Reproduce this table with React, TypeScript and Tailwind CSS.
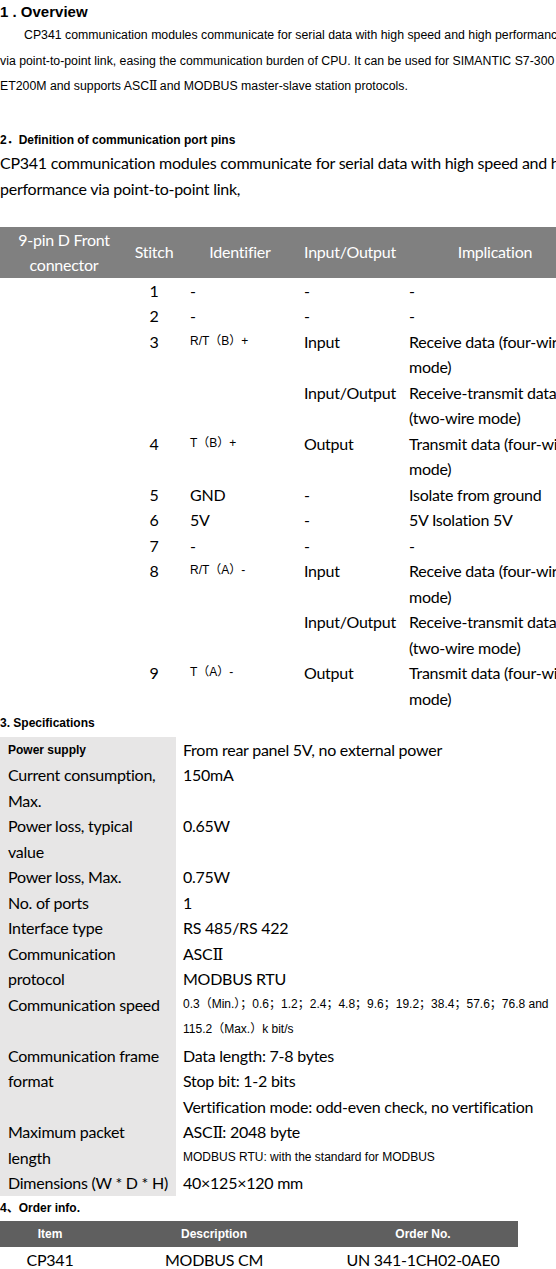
import type { ReactNode } from 'react';

const yahei = "font-['Lato','Noto_Sans_CJK_SC',sans-serif] text-[16px] tracking-[-0.25px]";
const arial = "font-['Liberation_Sans','Noto_Sans_CJK_SC',Arial,sans-serif]";

interface PinRow {
    stitch?: string;
    id?: ReactNode;
    span?: number;
    io: string;
    text: ReactNode;
}

const small = (s: string) => (
    <span className={`${arial} inline-block align-top text-[12px] leading-[25.5px] tracking-normal`}>{s}</span>
);

const Roman2 = () => <span className="font-['DejaVu_Serif',serif] leading-none tracking-[-1px]">Ⅱ</span>;

const pins: PinRow[] = [
    { stitch: '1', id: '-', io: '-', text: '-' },
    { stitch: '2', id: '-', io: '-', text: '-' },
    { stitch: '3', id: small('R/T（B）+'), span: 2, io: 'Input', text: <>Receive data (four-wire<br />mode)</> },
    { io: 'Input/Output', text: <>Receive-transmit data<br />(two-wire mode)</> },
    { stitch: '4', id: small('T（B）+'), io: 'Output', text: <>Transmit data (four-wire<br />mode)</> },
    { stitch: '5', id: 'GND', io: '-', text: 'Isolate from ground' },
    { stitch: '6', id: '5V', io: '-', text: '5V Isolation 5V' },
    { stitch: '7', id: '-', io: '-', text: '-' },
    { stitch: '8', id: small('R/T（A）-'), span: 2, io: 'Input', text: <>Receive data (four-wire<br />mode)</> },
    { io: 'Input/Output', text: <>Receive-transmit data<br />(two-wire mode)</> },
    { stitch: '9', id: small('T（A）-'), io: 'Output', text: <>Transmit data (four-wire<br />mode)</> },
];

interface SpecRow {
    label: ReactNode;
    value: ReactNode;
}

const smallLine = `${arial} block text-[12px] leading-[25.5px] tracking-normal`;

const specs: SpecRow[] = [
    {
        label: <span className={`${arial} block pt-[2px] text-[12px] font-bold leading-[23.5px] tracking-normal`}>Power supply</span>,
        value: 'From rear panel 5V, no external power',
    },
    { label: <>Current consumption,<br />Max.</>, value: '150mA' },
    { label: <>Power loss, typical<br />value</>, value: '0.65W' },
    { label: 'Power loss, Max.', value: '0.75W' },
    { label: 'No. of ports', value: '1' },
    { label: 'Interface type', value: 'RS 485/RS 422' },
    { label: <>Communication<br />protocol</>, value: <>ASC<Roman2 /><br />MODBUS RTU</> },
    {
        label: 'Communication speed',
        value: (
            <>
                <span className={smallLine}>0.3（Min.）；0.6；1.2；2.4；4.8；9.6；19.2；38.4；57.6；76.8 and</span>
                <span className={smallLine}>115.2（Max.）k bit/s</span>
            </>
        ),
    },
    {
        label: <>Communication frame<br />format</>,
        value: <>Data length: 7-8 bytes<br />Stop bit: 1-2 bits<br />Vertification mode: odd-even check, no vertification</>,
    },
    {
        label: <>Maximum packet<br />length</>,
        value: (
            <>
                <span className="block">ASC<Roman2 />: 2048 byte</span>
                <span className={smallLine}>MODBUS RTU: with the standard for MODBUS</span>
            </>
        ),
    },
    { label: 'Dimensions (W * D * H)', value: '40×125×120  mm' },
];

export default function App() {
    return (
        <div className="w-[556px] overflow-hidden bg-white text-black">
            <div className="w-[620px]">
                <Overview />
                <PinSection />
                <Specifications />
                <OrderInfo />
            </div>
        </div>
    );
}

function Overview() {
    return (
        <section>
            <h1 className={`${arial} text-[15px] font-bold leading-[23px]`}>1 . Overview</h1>
            <p className={`${arial} text-[12.3px] leading-[25.5px] whitespace-nowrap`}>
                <span className="pl-[24px]">CP341 communication modules communicate for serial data with high speed and high performance</span>
                <br />
                via point-to-point link, easing the communication burden of CPU. It can be used for SIMANTIC S7-300 and
                <br />
                ET200M and supports ASC<Roman2 /> and MODBUS master-slave station protocols.
            </p>
        </section>
    );
}

function PinSection() {
    return (
        <section className="pt-[30px]">
            <h2 className={`${arial} text-[12px] font-bold leading-[20px]`}>2．Definition of communication port pins</h2>
            <p className={`${yahei} leading-[26px] whitespace-nowrap`}>
                CP341 communication modules communicate for serial data with high speed and high
                <br />
                performance via point-to-point link,
            </p>
            <table className={`${yahei} mt-[25px] w-[600px] table-fixed border-collapse leading-[25.5px]`}>
                <colgroup>
                    <col className="w-[128px]" />
                    <col className="w-[52px]" />
                    <col className="w-[120px]" />
                    <col className="w-[100px]" />
                    <col className="w-[200px]" />
                </colgroup>
                <thead>
                    <tr className="bg-[#808080] text-white">
                        <th className="p-0 text-center font-normal">9-pin D Front<br />connector</th>
                        <th className="p-0 text-center font-normal">Stitch</th>
                        <th className="p-0 text-center font-normal">Identifier</th>
                        <th className="p-0 text-center font-normal">Input/Output</th>
                        <th className="p-0 pr-[10px] text-center font-normal">Implication</th>
                    </tr>
                </thead>
                <tbody>
                    {pins.map((row, i) => (
                        <tr key={i} className="align-top">
                            {i === 0 && <td rowSpan={pins.length} className="p-0" />}
                            {row.stitch && (
                                <td rowSpan={row.span ?? 1} className="p-0 text-center">{row.stitch}</td>
                            )}
                            {row.stitch && (
                                <td rowSpan={row.span ?? 1} className="p-0 pl-[10px] whitespace-nowrap">{row.id}</td>
                            )}
                            <td className="p-0 pl-[4px] whitespace-nowrap">{row.io}</td>
                            <td className="p-0 pl-[9px] whitespace-nowrap">{row.text}</td>
                        </tr>
                    ))}
                </tbody>
            </table>
        </section>
    );
}

function Specifications() {
    return (
        <section>
            <h2 className={`${arial} text-[12px] font-bold leading-[25.5px]`}>3. Specifications</h2>
            <table className={`${yahei} w-[600px] table-fixed border-collapse leading-[25.5px]`}>
                <colgroup>
                    <col className="w-[176px]" />
                    <col />
                </colgroup>
                <tbody>
                    {specs.map((row, i) => (
                        <tr key={i} className="align-top">
                            <td className="bg-[#e7e6e6] p-0 pl-[8px] whitespace-nowrap">{row.label}</td>
                            <td className="p-0 pl-[7px] whitespace-nowrap">{row.value}</td>
                        </tr>
                    ))}
                </tbody>
            </table>
        </section>
    );
}

function OrderInfo() {
    return (
        <section>
            <h2 className={`${arial} text-[12px] font-bold leading-[25px]`}>4、Order info.</h2>
            <table className="w-[518px] table-fixed border-collapse">
                <colgroup>
                    <col className="w-[100px]" />
                    <col className="w-[228px]" />
                    <col className="w-[190px]" />
                </colgroup>
                <thead>
                    <tr className={`${arial} h-[26px] bg-[#5f5f5f] text-[12px] text-white`}>
                        <th className="p-0 text-center font-bold">Item</th>
                        <th className="p-0 text-center font-bold">Description</th>
                        <th className="p-0 text-center font-bold">Order No.</th>
                    </tr>
                </thead>
                <tbody>
                    <tr className={`${yahei} leading-[25px]`}>
                        <td className="p-0 text-center">CP341</td>
                        <td className="p-0 text-center">MODBUS CM</td>
                        <td className="p-0 text-center">UN 341-1CH02-0AE0</td>
                    </tr>
                </tbody>
            </table>
        </section>
    );
}
